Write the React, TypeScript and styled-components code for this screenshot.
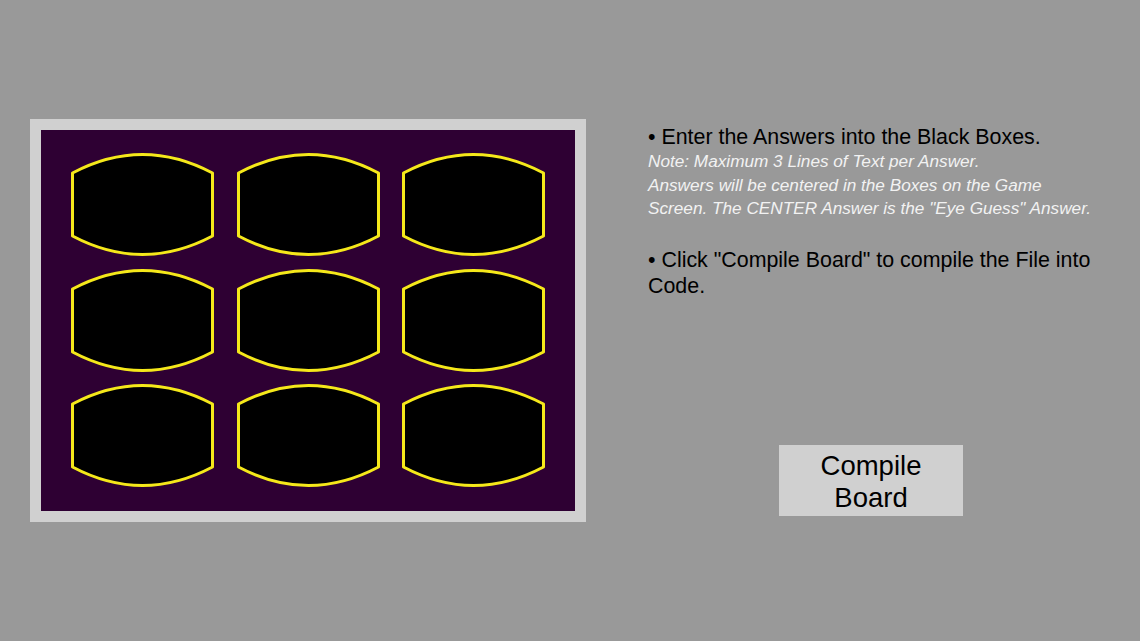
import styled, { createGlobalStyle } from "styled-components";

const GlobalStyle = createGlobalStyle`
  html, body {
    margin: 0;
    padding: 0;
    background: #999999;
    font-family: "Liberation Sans", Arial, sans-serif;
  }
`;

const Page = styled.div`
  width: 1140px;
  height: 641px;
  box-sizing: border-box;
  padding: 119px 0 0 30px;
  display: flex;
  align-items: flex-start;
  overflow: hidden;
`;

const BoardFrame = styled.div`
  padding: 11px;
  background: #d0d0d0;
`;

const Board = styled.div`
  width: 534px;
  height: 381px;
  box-sizing: border-box;
  padding: 23px 30px 0;
  background: #2e0033;
  display: grid;
  grid-template-columns: repeat(3, 143px);
  grid-auto-rows: 103px;
  column-gap: 22.5px;
  row-gap: 12.5px;
`;

const AnswerSlot = styled.svg`
  display: block;
  width: 143px;
  height: 103px;
  overflow: visible;
`;

const Side = styled.div`
  margin-left: 62px;
  width: 460px;
  display: flex;
  flex-direction: column;
`;

const Instructions = styled.div`
  padding-top: 5px;
`;

const Step = styled.p<{ gap?: number }>`
  margin: 0;
  margin-top: ${(p) => p.gap ?? 0}px;
  font-size: 21.4px;
  line-height: 26px;
  color: #000;
`;

const Note = styled.p`
  margin: 0;
  width: 448px;
  font-size: 17.2px;
  line-height: 23.5px;
  font-style: italic;
  color: #f2f2f2;
`;

const CompileButton = styled.button`
  margin: 146px 0 0 131px;
  width: 184px;
  height: 71px;
  padding: 4px 0 0;
  border: 0;
  background: #d0d0d0;
  color: #000;
  font-family: "Liberation Sans", Arial, sans-serif;
  font-size: 27.5px;
  line-height: 32px;
  cursor: pointer;
`;

const Slot = () => (
  <AnswerSlot viewBox="0 0 143 103">
    <path
      d="M1.5 20 Q71.5 -17 141.5 20 L141.5 83 Q71.5 120 1.5 83 Z"
      fill="#000"
      stroke="#f5e81a"
      strokeWidth={3}
      strokeLinejoin="round"
    />
  </AnswerSlot>
);

export default function App() {
  return (
    <>
      <GlobalStyle />
      <Page>
        <BoardFrame>
          <Board>
            {Array.from({ length: 9 }, (_, i) => (
              <Slot key={i} />
            ))}
          </Board>
        </BoardFrame>
        <Side>
          <Instructions>
            <Step>• Enter the Answers into the Black Boxes.</Step>
            <Note>
              Note: Maximum 3 Lines of Text per Answer.
              <br />
              Answers will be centered in the Boxes on the Game Screen. The
              CENTER Answer is the "Eye Guess" Answer.
            </Note>
            <Step gap={26}>
              • Click "Compile Board" to compile the File into Code.
            </Step>
          </Instructions>
          <CompileButton>
            Compile
            <br />
            Board
          </CompileButton>
        </Side>
      </Page>
    </>
  );
}
